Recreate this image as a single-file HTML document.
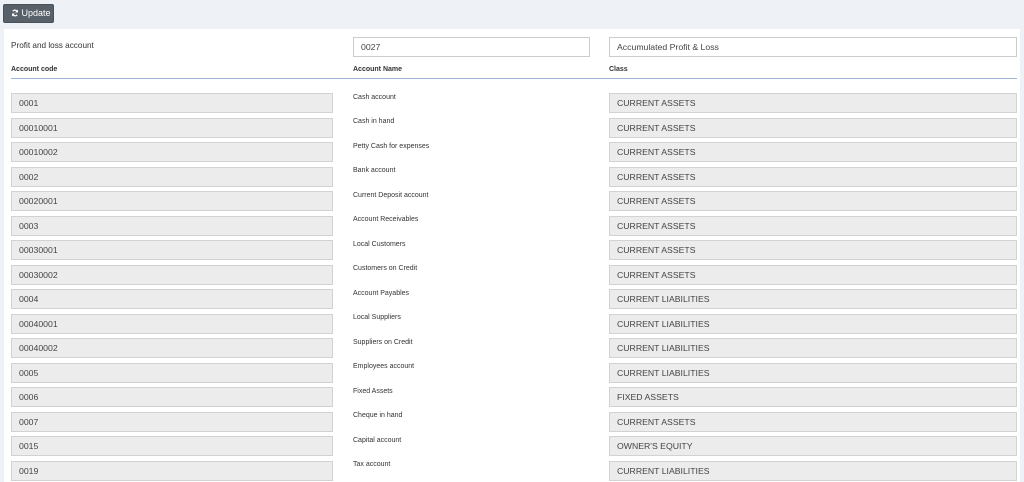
<!DOCTYPE html>
<html><head><style>
*{box-sizing:border-box;margin:0;padding:0}
body{width:1024px;height:482px;overflow:hidden;background:#eef1f5;font-family:"Liberation Sans",sans-serif;position:relative;color:#333}
.btn{position:absolute;left:3px;top:4px;width:51px;height:19px;background:#58606a;border:1px solid #4a5058;color:#fff;font-size:9px;line-height:17px;padding-left:7px;border-radius:2px}
.panel{position:absolute;left:4px;top:29px;width:1016px;height:453px;background:#fff}
.a{position:absolute}
.in{position:absolute;height:20px;border:1px solid #ccc;font-size:8.7px;line-height:18px;padding-left:7px;color:#444}
.g{background:#ececec;border-color:#d2d2d2}
.h{font-size:7px;font-weight:bold;color:#333}
.n{position:absolute;left:353px;font-size:7px;color:#333}
</style></head><body>
<div class="btn"><svg width="8" height="8" viewBox="0 0 16 16" style="vertical-align:-1px"><path d="M13 6A5.5 5.5 0 0 0 3.5 4.5M3 10a5.5 5.5 0 0 0 9.5 1.5" stroke="#fff" stroke-width="2.5" fill="none"/><path d="M14 1v6H8zM2 15V9h6z" fill="#fff"/></svg> Update</div>
<div class="panel"></div>
<div class="a" style="left:11px;top:41px;font-size:8.2px">Profit and loss account</div>
<div class="in" style="left:353px;top:37px;width:237px;background:#fff">0027</div>
<div class="in" style="left:609px;top:37px;width:408px;background:#fff">Accumulated Profit &amp; Loss</div>
<div class="a h" style="left:11px;top:66px">Account code</div>
<div class="a h" style="left:353px;top:66px">Account Name</div>
<div class="a h" style="left:609px;top:66px">Class</div>
<div class="a" style="left:11px;top:78px;width:1006px;height:1px;background:#9fb6d2"></div>
<div id="rows"></div>
<script>
var d=[["0001","Cash account","CURRENT ASSETS"],["00010001","Cash in hand","CURRENT ASSETS"],["00010002","Petty Cash for expenses","CURRENT ASSETS"],["0002","Bank account","CURRENT ASSETS"],["00020001","Current Deposit account","CURRENT ASSETS"],["0003","Account Receivables","CURRENT ASSETS"],["00030001","Local Customers","CURRENT ASSETS"],["00030002","Customers on Credit","CURRENT ASSETS"],["0004","Account Payables","CURRENT LIABILITIES"],["00040001","Local Suppliers","CURRENT LIABILITIES"],["00040002","Suppliers on Credit","CURRENT LIABILITIES"],["0005","Employees account","CURRENT LIABILITIES"],["0006","Fixed Assets","FIXED ASSETS"],["0007","Cheque in hand","CURRENT ASSETS"],["0015","Capital account","OWNER'S EQUITY"],["0019","Tax account","CURRENT LIABILITIES"]];
var h="";d.forEach(function(r,i){var t=93+i*24.53;
h+='<div class="in g" style="left:11px;top:'+t+'px;width:322px">'+r[0]+'</div>';
h+='<div class="n" style="top:'+(t+0.5)+'px">'+r[1]+'</div>';
h+='<div class="in g" style="left:609px;top:'+t+'px;width:408px">'+r[2]+'</div>';});
document.getElementById("rows").innerHTML=h;
</script>
</body></html>
